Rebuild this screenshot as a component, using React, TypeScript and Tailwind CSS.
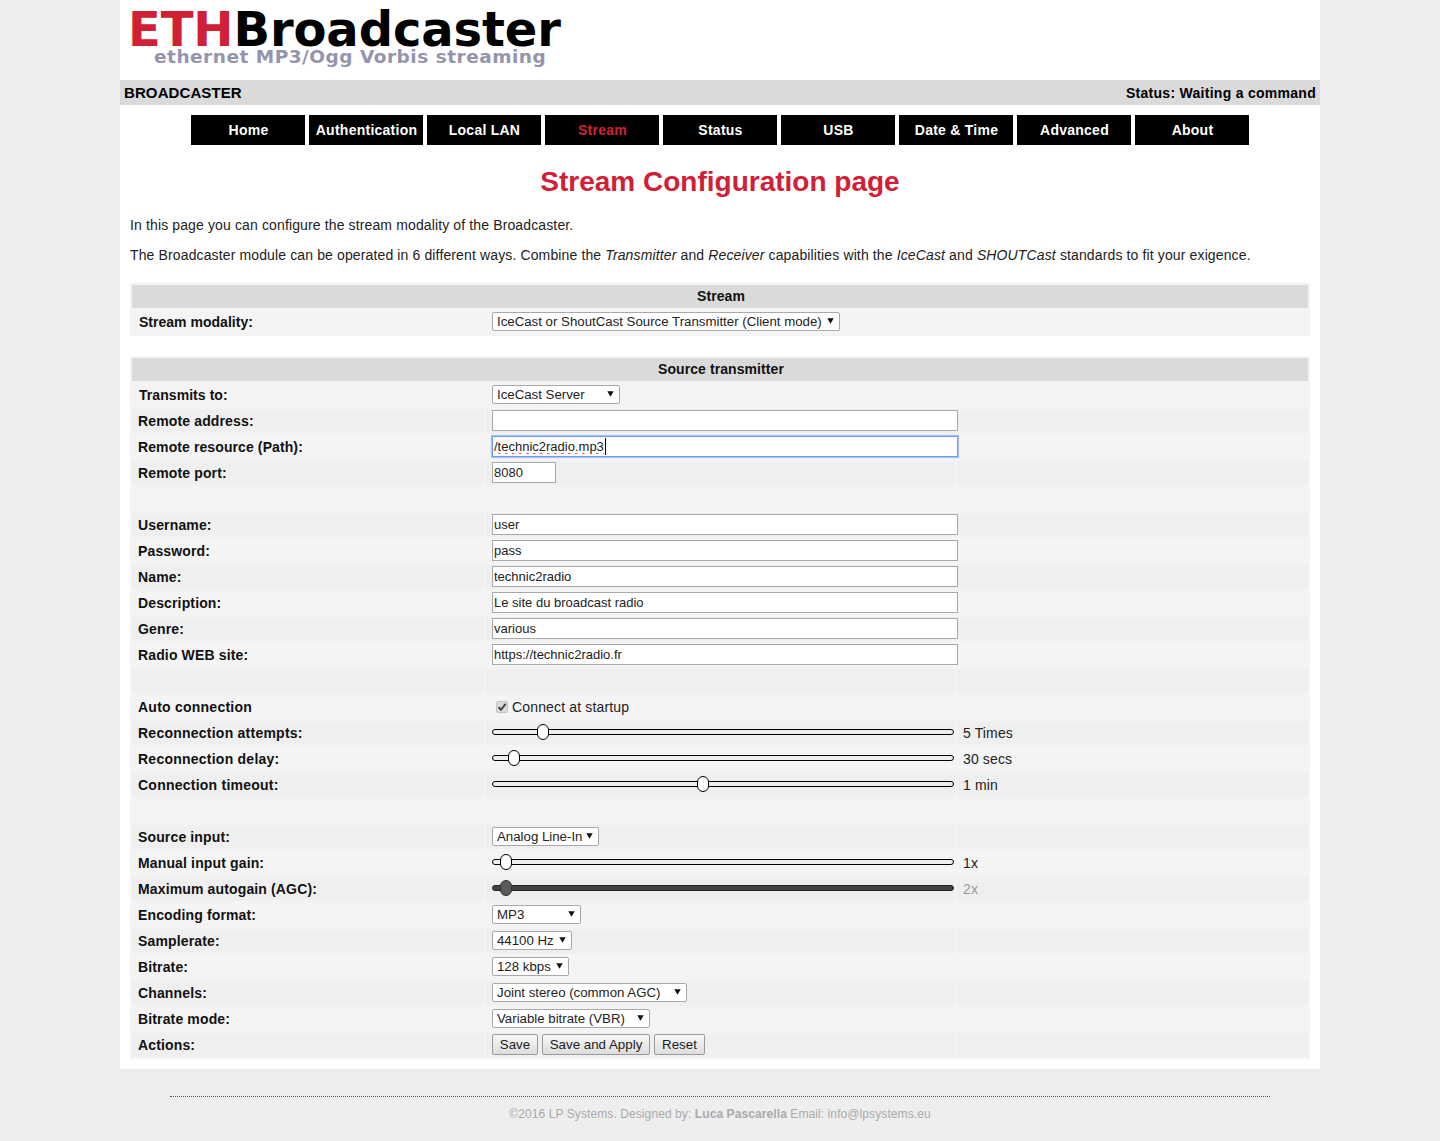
import React from "react";

const navItems = ["Home", "Authentication", "Local LAN", "Stream", "Status", "USB", "Date & Time", "Advanced", "About"];

function Select({ value, width }: { value: string; width: string }) {
  return (
    <span className={`relative mt-[1px] block h-[19px] ${width}`}>
      <select
        defaultValue={value}
        className="block h-[19px] w-full appearance-none rounded-[2px] border border-[#a9a9a9] bg-white pl-[4px] text-[13.25px] leading-[17px] text-[#222] outline-none"
      >
        <option>{value}</option>
      </select>
      <svg className="pointer-events-none absolute right-[6px] top-[6px]" width="7" height="6" viewBox="0 0 7 6">
        <path d="M0.3 0.3H6.7L3.5 5.8Z" fill="#111" />
      </svg>
    </span>
  );
}

function TextInput({ value, width = "w-[466px]", focus }: { value: string; width?: string; focus?: boolean }) {
  return (
    <span className={`relative z-10 block h-[21px] ${width}`}>
      <input
        readOnly
        defaultValue={value}
        className={`block h-[21px] w-full rounded-none bg-white px-[1px] text-[13px] text-[#222] outline-none ${
          focus
            ? "border border-[#6f9be8] underline decoration-[#e04040] decoration-wavy decoration-1 shadow-[0_0_1px_1px_#a9c4f2]"
            : "border border-[#a9a9a9]"
        }`}
      />
      {focus && <span className="absolute left-[113px] top-[2px] h-[17px] w-[1px] bg-black" />}
    </span>
  );
}

function Slider({ at, disabled }: { at: number; disabled?: boolean }) {
  return (
    <div
      className={`relative mt-[1px] h-[6px] w-[462px] rounded-[3px] border ${
        disabled ? "border-[#222] bg-[#444]" : "border-black bg-[#eeeeee]"
      }`}
    >
      <div
        style={{ left: at }}
        className={`absolute top-[-6px] h-[16px] w-[12px] rounded-[6px] border ${
          disabled ? "border-[#333] bg-[#5a5a5a]" : "border-black bg-white"
        }`}
      />
    </div>
  );
}

function Check() {
  return (
    <span className="mr-[4px] ml-[4px] inline-flex h-[12px] w-[12px] items-center justify-center rounded-[2px] border border-[#c4c4c4] bg-[#dcdcdc]">
      <svg width="10" height="10" viewBox="0 0 10 10">
        <path d="M1.5 5.2L4 7.8L8.6 1.8" fill="none" stroke="#444" strokeWidth="2" />
      </svg>
    </span>
  );
}

function Btn({ label, width }: { label: string; width: string }) {
  return (
    <button
      className={`h-[21px] rounded-[2px] border border-[#9a9a9a] bg-gradient-to-b from-[#f8f8f8] to-[#dddddd] text-[13.33px] leading-[19px] text-[#222] ${width}`}
    >
      {label}
    </button>
  );
}

type Row = { label?: string; pl?: string; track?: string; field?: React.ReactNode; extra?: React.ReactNode };

function Table({ title, rows }: { title: string; rows: Row[] }) {
  return (
    <table className="w-[1180px] table-fixed border-separate border-spacing-[2px] bg-[#f4f4f4]">
      <colgroup>
        <col className="w-[352px]" />
        <col className="w-[469px]" />
        <col className="w-[351px]" />
      </colgroup>
      <thead>
        <tr>
          <th colSpan={3} className="h-[23px] bg-[#dadada] p-0 pl-[2px] text-center align-middle text-[14px] font-bold tracking-[0.08px] text-[#111]">
            {title}
          </th>
        </tr>
      </thead>
      <tbody>
        {rows.map((r, i) => {
          const bg = i % 2 === 1 ? "bg-[#efefef]" : "bg-[#f4f4f4]";
          return (
            <tr key={i} className="h-[24px]">
              <td className={`p-0 pt-[1px] align-middle text-[14px] font-bold text-[#111] ${bg} ${r.pl ?? "pl-[6px]"} ${r.track ?? "tracking-[0.14px]"}`}>
                {r.label}
              </td>
              <td className={`relative p-0 pl-[6px] align-top pt-[1px] ${bg}`}>{r.field}</td>
              <td className={`p-0 pl-[6px] pt-[1px] align-middle text-[14px] tracking-[0.13px] text-[#222] ${bg}`}>{r.extra}</td>
            </tr>
          );
        })}
      </tbody>
    </table>
  );
}

const sliderCell = "h-[18px] flex items-center";
const wide = "tracking-[0.24px]";

const sourceRows: Row[] = [
  { label: "Transmits to:", pl: "pl-[7px]", track: "tracking-[0.06px]", field: <Select value="IceCast Server" width="w-[128px]" /> },
  { label: "Remote address:", field: <TextInput value="" /> },
  { label: "Remote resource (Path):", track: "tracking-[0.1px]", field: <TextInput value="/technic2radio.mp3" focus /> },
  { label: "Remote port:", field: <TextInput value="8080" width="w-[64px]" /> },
  {},
  { label: "Username:", field: <TextInput value="user" /> },
  { label: "Password:", field: <TextInput value="pass" /> },
  { label: "Name:", field: <TextInput value="technic2radio" /> },
  { label: "Description:", field: <TextInput value="Le site du broadcast radio" /> },
  { label: "Genre:", field: <TextInput value="various" /> },
  { label: "Radio WEB site:", field: <TextInput value="https://technic2radio.fr" /> },
  {},
  {
    label: "Auto connection",
    track: wide,
    field: (
      <div className="flex h-[22px] items-center text-[14px] tracking-[0.15px] text-[#222]">
        <Check />
        Connect at startup
      </div>
    ),
  },
  { label: "Reconnection attempts:", track: wide, field: <div className={sliderCell}><Slider at={44} /></div>, extra: "5 Times" },
  { label: "Reconnection delay:", track: wide, field: <div className={sliderCell}><Slider at={15} /></div>, extra: "30 secs" },
  { label: "Connection timeout:", track: wide, field: <div className={sliderCell}><Slider at={204} /></div>, extra: "1 min" },
  {},
  { label: "Source input:", field: <Select value="Analog Line-In" width="w-[107px]" /> },
  { label: "Manual input gain:", field: <div className={sliderCell}><Slider at={7} /></div>, extra: "1x" },
  {
    label: "Maximum autogain (AGC):",
    field: <div className={sliderCell}><Slider at={7} disabled /></div>,
    extra: <span className="text-[#999]">2x</span>,
  },
  { label: "Encoding format:", field: <Select value="MP3" width="w-[89px]" /> },
  { label: "Samplerate:", field: <Select value="44100 Hz" width="w-[80px]" /> },
  { label: "Bitrate:", field: <Select value="128 kbps" width="w-[77px]" /> },
  { label: "Channels:", field: <Select value="Joint stereo (common AGC)" width="w-[195px]" /> },
  { label: "Bitrate mode:", field: <Select value="Variable bitrate (VBR)" width="w-[158px]" /> },
  {
    label: "Actions:",
    field: (
      <div className="flex gap-[4px]">
        <Btn label="Save" width="w-[46px]" />
        <Btn label="Save and Apply" width="w-[108px]" />
        <Btn label="Reset" width="w-[51px]" />
      </div>
    ),
  },
];

export default function App() {
  return (
    <div className="min-h-[1141px] bg-[#eeeeee] font-['Liberation_Sans',Arial,sans-serif] text-[14px] text-[#222]">
      <div className="mx-auto w-[1200px] bg-white">
        <div className="h-[80px] pl-[8px] pt-[9px] font-['DejaVu_Sans',sans-serif] font-bold">
          <div className="text-[48px] leading-[40px] tracking-[-0.1px] text-black">
            <span className="text-[#d12035]">ETH</span>Broadcaster
          </div>
          <div className="ml-[26px] text-[18.5px] leading-[16px] tracking-[0.5px] text-[#9494ae]">
            ethernet MP3/Ogg Vorbis streaming
          </div>
        </div>
        <div className="flex h-[25px] items-center justify-between bg-[#dadada] px-[4px] pt-[1px] font-bold text-black">
          <span className="text-[15px] tracking-[0.1px]">BROADCASTER</span>
          <span className="text-[14px] tracking-[0.28px]">Status: Waiting a command</span>
        </div>
        <nav className="mt-[10px] flex justify-center gap-[4px]">
          {navItems.map((n) => (
            <a
              key={n}
              className={`flex h-[30px] w-[114px] items-center justify-center bg-black pl-[1px] text-[14px] font-bold tracking-[0.25px] ${
                n === "Stream" ? "text-[#d12035]" : "text-white"
              }`}
            >
              {n}
            </a>
          ))}
        </nav>
        <h1 className="mt-[21px] text-center text-[28px] leading-[32px] font-bold text-[#d12035]">Stream Configuration page</h1>
        <div className="px-[10px]">
          <p className="mt-[18px] leading-[18px] tracking-[0.13px]">In this page you can configure the stream modality of the Broadcaster.</p>
          <p className="mt-[12px] leading-[18px] tracking-[0.13px]">
            The Broadcaster module can be operated in 6 different ways. Combine the <i>Transmitter</i> and <i>Receiver</i> capabilities with the{" "}
            <i>IceCast</i> and <i>SHOUTCast</i> standards to fit your exigence.
          </p>
          <div className="mt-[19px] flex flex-col gap-[20px] pb-[10px]">
            <Table
              title="Stream"
              rows={[
                {
                  label: "Stream modality:",
                  pl: "pl-[7px]",
                  track: "tracking-[0.02px]",
                  field: <Select value="IceCast or ShoutCast Source Transmitter (Client mode)" width="w-[348px]" />,
                },
              ]}
            />
            <Table title="Source transmitter" rows={sourceRows} />
          </div>
        </div>
      </div>
      <footer className="mx-auto mt-[27px] w-[1100px] border-t border-dotted border-[#555] pt-[9px] text-center text-[12px] leading-[16px] tracking-[0.09px] text-[#aaaaaa]">
        ©2016 LP Systems. Designed by: <b>Luca Pascarella</b> Email: info@lpsystems.eu
      </footer>
    </div>
  );
}
